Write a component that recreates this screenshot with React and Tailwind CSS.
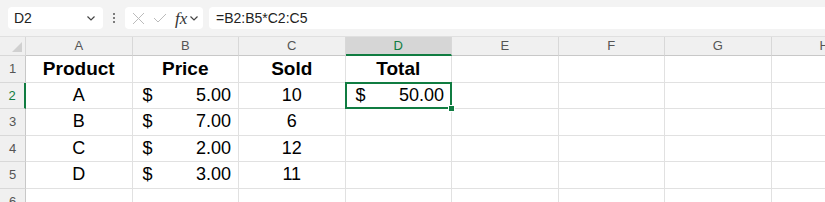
import React from "react";

const cols = ["A", "B", "C", "D", "E", "F", "G", "H"];

const rows = [
  { n: 1, cells: ["Product", "Price", "Sold", "Total"], head: true },
  { n: 2, cells: ["A", 5, 10, 50] },
  { n: 3, cells: ["B", 7, 6] },
  { n: 4, cells: ["C", 2, 12] },
  { n: 5, cells: ["D", 3, 11] },
  { n: 6, cells: [] },
];

const Money = ({ v }) => (
  <div className="flex w-full justify-between pl-[10px] pr-[7px]">
    <span>$</span>
    <span>{v.toFixed(2)}</span>
  </div>
);

const Chevron = () => (
  <svg width="12" height="12" viewBox="0 0 12 12" fill="none" stroke="#444" strokeWidth="1.2">
    <path d="M2.5 4.5 L6 8 L9.5 4.5" />
  </svg>
);

const Toolbar = () => (
  <div className="flex h-[37px] items-center gap-[6px] bg-[#f3f3f3] pl-[8px] border-b border-[#e0e0e0]">
    <div className="flex h-[22px] w-[95px] shrink-0 items-center justify-between rounded-[4px] bg-white pl-[6px] pr-[6px] text-[14px] text-[#222]">
      <span>D2</span>
      <Chevron />
    </div>
    <div className="flex w-[10px] shrink-0 flex-col items-center gap-[2px]">
      <span className="h-[2px] w-[2px] rounded-full bg-[#555]" />
      <span className="h-[2px] w-[2px] rounded-full bg-[#555]" />
      <span className="h-[2px] w-[2px] rounded-full bg-[#555]" />
    </div>
    <div className="flex h-[22px] w-[78px] shrink-0 items-center gap-[8px] rounded-[4px] bg-white pl-[7px]">
      <svg width="13" height="13" viewBox="0 0 13 13" stroke="#bbb" strokeWidth="1">
        <path d="M1 1 L12 12 M12 1 L1 12" />
      </svg>
      <svg width="14" height="12" viewBox="0 0 14 12" fill="none" stroke="#bbb" strokeWidth="1">
        <path d="M1 6 L5 10 L13 2" />
      </svg>
      <div className="flex items-center gap-[1px]">
        <span className="font-['Liberation_Serif'] text-[17px] italic text-[#333] leading-none">fx</span>
        <Chevron />
      </div>
    </div>
    <div className="flex h-[22px] flex-1 items-center rounded-l-[4px] bg-white pl-[7px] text-[14px] text-[#222]">
      =B2:B5*C2:C5
    </div>
  </div>
);

export default function App() {
  return (
    <div className="h-[202px] w-[825px] overflow-hidden bg-white font-['Liberation_Sans',Arial,sans-serif]">
      <Toolbar />
      <div className="flex h-[19px] bg-[#f0f0f0] text-[13px] text-[#555]">
        <div className="relative w-[26px] shrink-0 border-r border-b border-[#d8d8d8]">
          <svg className="absolute right-[3px] bottom-[3px]" width="10" height="10" viewBox="0 0 10 10">
            <path d="M10 0 L10 10 L0 10 Z" fill="#d0d0d0" />
          </svg>
        </div>
        {cols.map((c) => (
          <div
            key={c}
            className={`flex w-[106.5px] shrink-0 items-center justify-center border-r border-[#d8d8d8] ${
              c === "D" ? "bg-[#d6d6d6] border-b-2 border-b-[#107c41] text-[#107c41]" : "border-b border-b-[#c8c8c8]"
            }`}
          >
            {c}
          </div>
        ))}
      </div>
      {rows.map((r) => (
        <div key={r.n} className="flex h-[26.5px] text-[18px] text-black">
          <div
            className={`flex w-[26px] shrink-0 items-center justify-center bg-[#f0f0f0] text-[13px] border-b border-[#d8d8d8] ${
              r.n === 2 ? "border-r-2 border-r-[#107c41] text-[#107c41] bg-[#e6e6e6]" : "border-r border-r-[#c8c8c8] text-[#555]"
            }`}
          >
            {r.n}
          </div>
          {cols.map((c, i) => {
            const v = r.cells[i];
            const sel = r.n === 2 && c === "D";
            return (
              <div
                key={c}
                className={`relative flex w-[106.5px] shrink-0 items-center justify-center border-r border-b border-[#e1e1e1] ${
                  r.head ? "text-[19px] font-bold" : ""
                } ${sel ? "z-10" : ""}`}
              >
                {typeof v === "number" && (i === 1 || i === 3) ? <Money v={v} /> : v}
                {sel && (
                  <>
                    <div className="pointer-events-none absolute -left-[1px] -top-[1px] h-[calc(100%+2px)] w-[calc(100%+2px)] border-2 border-[#107c41]" />
                    <div className="absolute -bottom-[4px] -right-[4px] h-[7px] w-[7px] bg-[#107c41] border border-white" />
                  </>
                )}
              </div>
            );
          })}
        </div>
      ))}
    </div>
  );
}
